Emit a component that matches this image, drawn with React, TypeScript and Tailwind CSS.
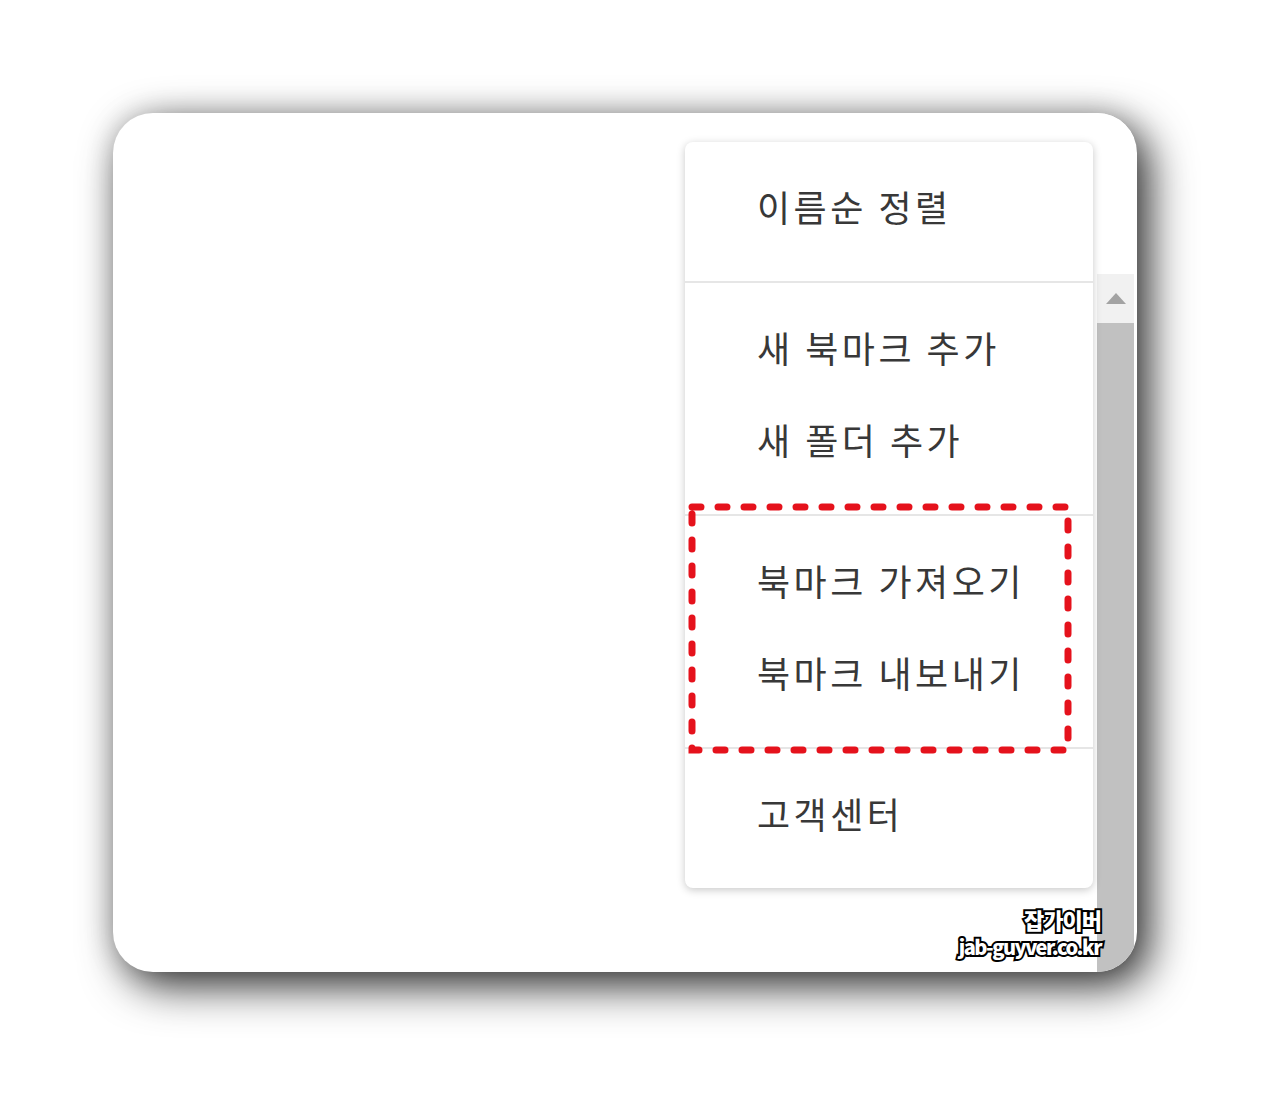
const sections: string[][] = [
  ['이름순 정렬'],
  ['새 북마크 추가', '새 폴더 추가'],
  ['북마크 가져오기', '북마크 내보내기'],
  ['고객센터'],
];

function Menu() {
  return (
    <div className="absolute left-[572px] top-[29px] w-[408px] rounded-[8px] bg-white shadow-[0_2px_8px_rgba(0,0,0,0.22)]">
      {sections.map((items, i) => (
        <div
          key={i}
          className={`pt-[18px] pb-[29px] ${i > 0 ? 'border-t-2 border-[#e6e6e6]' : ''}`}
        >
          {items.map((label) => (
            <div
              key={label}
              className="flex h-[92px] items-center pl-[72px] text-[36px] leading-none text-[#383838] tracking-[3.5px]"
            >
              {label}
            </div>
          ))}
        </div>
      ))}
    </div>
  );
}

function Scrollbar() {
  return (
    <div className="flex w-[37px] flex-col">
      <div className="h-[161px] bg-white" />
      <div className="flex h-[49px] items-center justify-center bg-[#f1f1f1]">
        <svg width="20" height="11" viewBox="0 0 20 11">
          <path d="M10 0 L20 11 L0 11 Z" fill="#a3a3a3" />
        </svg>
      </div>
      <div className="flex-1 bg-[#c1c1c1]" />
    </div>
  );
}

export default function App() {
  return (
    <main
      className="h-[1115px] w-full bg-white pl-[113px] pt-[113px]"
      style={{ fontFamily: '"Noto Sans CJK KR", "Noto Sans", sans-serif' }}
    >
      <div className="relative flex h-[859px] w-[1024px] overflow-hidden rounded-[40px] bg-white pr-[3px] shadow-[0_0_28px_rgba(0,0,0,0.18),12px_14px_44px_rgba(0,0,0,0.8)]">
        <div className="flex-1" />
        <Scrollbar />
        <Menu />

        {/* red highlight around import / export */}
        <svg
          className="absolute left-[575px] top-[390px]"
          width="384"
          height="251"
          viewBox="0 0 384 251"
        >
          <rect
            x="4"
            y="4"
            width="376"
            height="243"
            fill="none"
            stroke="#e5121c"
            strokeWidth="7"
            strokeDasharray="9 17"
            strokeLinecap="round"
          />
        </svg>

        <div className="absolute right-[36px] top-[792px] flex flex-col items-end font-black leading-[28px] text-white [paint-order:stroke] [-webkit-text-stroke:4px_black]">
          <span className="text-[22px] tracking-[-1px]">잡가이버</span>
          <span className="text-[20px] tracking-[-1.5px]">jab-guyver.co.kr</span>
        </div>
      </div>
    </main>
  );
}
